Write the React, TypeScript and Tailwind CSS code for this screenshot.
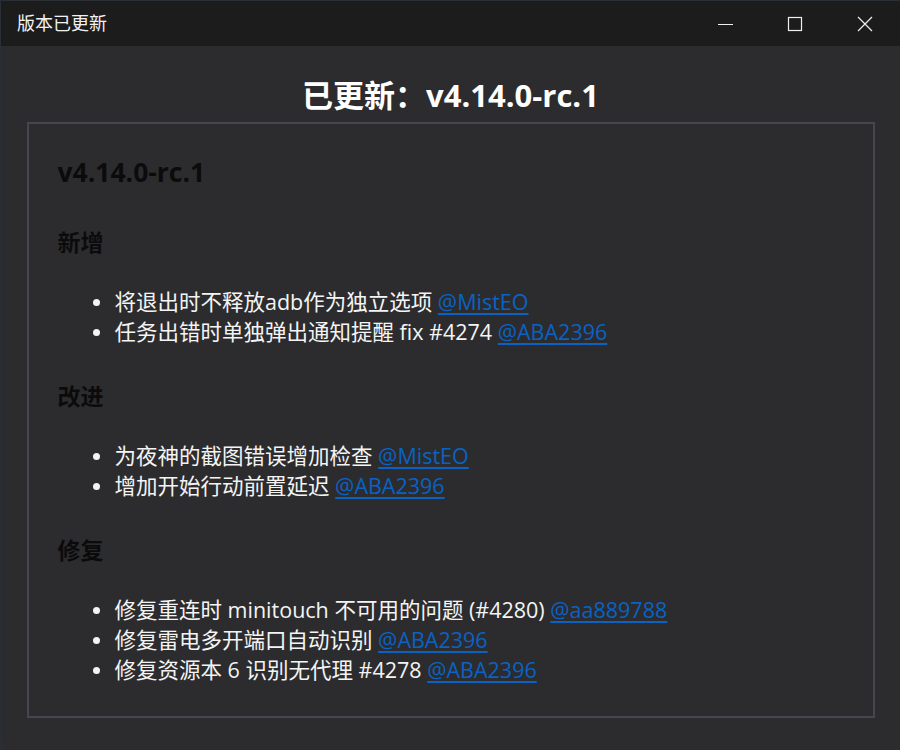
import React from "react";

const font = { fontFamily: '"Segoe UI", "Open Sans", "Noto Sans CJK SC", sans-serif' };

type Item = { text: string; link: string };

const sections: { title: string; items: Item[] }[] = [
  {
    title: "新增",
    items: [
      { text: "将退出时不释放adb作为独立选项", link: "@MistEO" },
      { text: "任务出错时单独弹出通知提醒 fix #4274", link: "@ABA2396" },
    ],
  },
  {
    title: "改进",
    items: [
      { text: "为夜神的截图错误增加检查", link: "@MistEO" },
      { text: "增加开始行动前置延迟", link: "@ABA2396" },
    ],
  },
  {
    title: "修复",
    items: [
      { text: "修复重连时 minitouch 不可用的问题 (#4280)", link: "@aa889788" },
      { text: "修复雷电多开端口自动识别", link: "@ABA2396" },
      { text: "修复资源本 6 识别无代理 #4278", link: "@ABA2396" },
    ],
  },
];

export default function App() {
  return (
    <div
      className="w-[900px] h-[750px] bg-[#2c2c2f] flex flex-col overflow-hidden border-t border-l border-[#2a2f35]"
      style={font}
    >
      <div className="h-[45px] bg-[#1c1c1c] flex items-center shrink-0">
        <div className="pl-[16px] text-[18px] text-[#f2f2f2] flex-1">版本已更新</div>
        <div className="flex h-full">
          <div className="w-[70px] h-full flex items-center justify-center">
            <svg width="16" height="16" viewBox="0 0 16 16">
              <line x1="1" y1="8.5" x2="16" y2="8.5" stroke="#f0f0f0" strokeWidth="1" />
            </svg>
          </div>
          <div className="w-[70px] h-full flex items-center justify-center">
            <svg width="16" height="16" viewBox="0 0 16 16">
              <rect x="1.5" y="1.5" width="13" height="13" fill="none" stroke="#f0f0f0" strokeWidth="1.2" />
            </svg>
          </div>
          <div className="w-[70px] h-full flex items-center justify-center">
            <svg width="16" height="16" viewBox="0 0 16 16">
              <path d="M1 1 L15 15 M15 1 L1 15" stroke="#f0f0f0" strokeWidth="1.2" />
            </svg>
          </div>
        </div>
      </div>
      <div className="flex flex-col items-center">
        <div className="h-[76px] flex items-end justify-center text-[31px] leading-[40px] font-bold text-white pb-[7px]">
          已更新：v4.14.0-rc.1
        </div>
        <div className="w-[848px] h-[596px] border-2 border-[#46464e] px-[29px] pt-[33px]">
          <div className="text-[26.5px] font-bold leading-[30px] text-[#0b0b0b]">v4.14.0-rc.1</div>
          {sections.map((s, si) => (
            <div key={s.title} className={si === 0 ? "mt-[40px]" : "mt-[34px]"}>
              <div className="text-[23px] font-bold leading-[30px] text-[#0b0b0b]">{s.title}</div>
              <ul className="mt-[30px]">
                {s.items.map((it) => (
                  <li key={it.text} className="flex items-center h-[30px] text-[21.5px] text-[#f4f4f4]">
                    <span className="w-[7px] h-[7px] rounded-full bg-[#f4f4f4] ml-[35px] mr-[15px] shrink-0" />
                    <span className="whitespace-nowrap">
                      {it.text}{" "}
                      <span className="text-[#0a62c2] underline underline-offset-[3px]">{it.link}</span>
                    </span>
                  </li>
                ))}
              </ul>
            </div>
          ))}
        </div>
      </div>
    </div>
  );
}
